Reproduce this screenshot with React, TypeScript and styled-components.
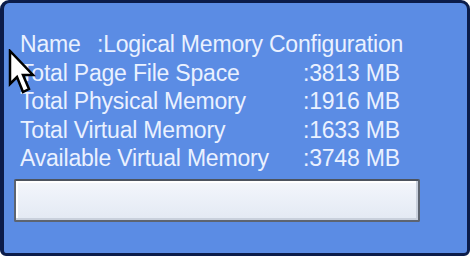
import styled, { createGlobalStyle } from 'styled-components'

const GlobalStyle = createGlobalStyle`
  html, body {
    margin: 0;
    padding: 0;
    background: #ffffff;
  }
  * {
    box-sizing: border-box;
  }
`

const Panel = styled.div`
  position: relative;
  width: 470px;
  height: 256px;
  background: #5b8ce4;
  border: 3px solid #0b1c4a;
  border-left-width: 4px;
  border-radius: 9px 9px 6px 6px;
  padding: 27px 0 0 16px;
  font-family: 'Liberation Sans', Arial, sans-serif;
  color: #eaf1ff;
  overflow: hidden;
`

const InfoList = styled.div`
  display: grid;
  grid-template-columns: 283px auto;
  font-size: 23px;
  line-height: 28.5px;
  letter-spacing: -0.2px;
`

const NameRow = styled.div`
  grid-column: 1 / span 2;
  display: flex;
  white-space: nowrap;
`

const NameLabel = styled.span`
  width: 77px;
`

const Label = styled.span`
  white-space: nowrap;
`

const Value = styled.span`
  white-space: nowrap;
`

const Field = styled.div`
  margin: 6px 0 0 -6px;
  width: 406px;
  height: 43px;
  background: linear-gradient(#f3f6fc, #e3e9f3);
  border: 2px solid #5d6470;
  border-top-color: #4c535e;
  border-radius: 2px;
  box-shadow: inset -2px -2px 0 #c9d0dc, inset 2px 2px 0 #ffffff;
`

const Cursor = styled.svg`
  position: absolute;
  left: 4px;
  top: 46px;
`

const rows = [
  { label: 'Total Page File Space', value: ':3813 MB' },
  { label: 'Total Physical Memory', value: ':1916 MB' },
  { label: 'Total Virtual Memory', value: ':1633 MB' },
  { label: 'Available Virtual Memory', value: ':3748 MB' },
]

export default function App() {
  return (
    <>
      <GlobalStyle />
      <Panel>
        <InfoList>
          <NameRow>
            <NameLabel>Name</NameLabel>
            <span>:Logical Memory Configuration</span>
          </NameRow>
          {rows.map((r) => (
            <>
              <Label key={r.label}>{r.label}</Label>
              <Value key={r.value}>{r.value}</Value>
            </>
          ))}
        </InfoList>
        <Field />
        <Cursor width="28" height="46" viewBox="0 0 28 46">
          <path
            d="M2 2 L2 35 L9 28 L15 43 L21 40 L15 26 L25 26 Z"
            fill="#ffffff"
            stroke="#000000"
            strokeWidth="2.5"
            strokeLinejoin="miter"
          />
        </Cursor>
      </Panel>
    </>
  )
}
